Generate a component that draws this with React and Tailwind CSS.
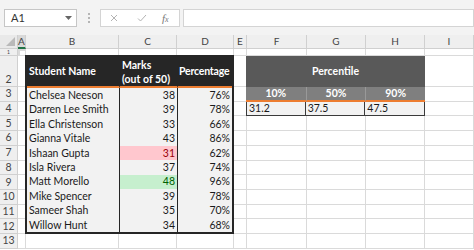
import React from "react";

const COLS = ["A", "B", "C", "D", "E", "F", "G", "H", "I"];

const STUDENTS = [
  { name: "Chelsea Neeson", marks: 38, pct: "76%" },
  { name: "Darren Lee Smith", marks: 39, pct: "78%" },
  { name: "Ella Christenson", marks: 33, pct: "66%" },
  { name: "Gianna Vitale", marks: 43, pct: "86%" },
  { name: "Ishaan Gupta", marks: 31, pct: "62%", tone: "bad" },
  { name: "Isla Rivera", marks: 37, pct: "74%" },
  { name: "Matt Morello", marks: 48, pct: "96%", tone: "good" },
  { name: "Mike Spencer", marks: 39, pct: "78%" },
  { name: "Sameer Shah", marks: 35, pct: "70%" },
  { name: "Willow Hunt", marks: 34, pct: "68%" },
];

function TopBar() {
  return (
    <div className="h-[35px] bg-[#f3f3f3] flex items-start pt-[9px] pl-[4px] text-[11px]">
      {/* name box */}
      <div className="w-[73px] h-[18px] bg-white border border-[#c6c6c6] flex items-center justify-between pl-[6px] pr-[4px] text-[#333]">
        <span>A1</span>
        <svg width="7" height="4" viewBox="0 0 7 4">
          <path d="M0 0h7L3.5 4z" fill="#666" />
        </svg>
      </div>
      <div className="w-[23px] h-[18px] flex flex-col items-center justify-center gap-[2px]">
        <span className="w-[2px] h-[2px] bg-[#b5b5b5]" />
        <span className="w-[2px] h-[2px] bg-[#b5b5b5]" />
        <span className="w-[2px] h-[2px] bg-[#b5b5b5]" />
      </div>
      {/* formula buttons */}
      <div className="w-[80px] h-[18px] bg-white border border-[#d4d4d4] flex items-center text-[#b0b0b0]">
        <svg className="ml-[9px]" width="8" height="8" viewBox="0 0 8 8">
          <path d="M1 1l6 6M7 1l-6 6" stroke="#b3b3b3" strokeWidth="1" />
        </svg>
        <svg className="ml-[19px]" width="10" height="8" viewBox="0 0 10 8">
          <path d="M1 4.5l2.5 2.5L9 1" stroke="#b3b3b3" strokeWidth="1" fill="none" />
        </svg>
        <span className="ml-[15px] italic font-['Liberation_Serif',serif] text-[11px] text-[#777]">
          f<span className="text-[8px]">x</span>
        </span>
      </div>
      <div className="ml-[3px] flex-1 h-[18px] bg-white border border-[#d4d4d4]" />
    </div>
  );
}

export default function App() {
  const rowNums = Array.from({ length: 13 }, (_, i) => i + 1);

  return (
    <main className="w-[474px] h-[250px] overflow-hidden bg-white font-['Lato','Open_Sans',sans-serif] text-[#1a1a1a]">
      <TopBar />

      <div className="grid grid-cols-[18px_8px_93px_58px_57px_13px_60px_59px_59px_1fr] grid-rows-[14px_7px_31px_repeat(11,14.73px)]">
        {/* corner */}
        <div className="col-start-1 row-start-1 bg-[#e9e9e9] border-r border-b border-[#cfcfcf] flex items-end justify-end p-[2px]">
          <svg width="9" height="9" viewBox="0 0 9 9">
            <path d="M9 0v9H0z" fill="#b9b9b9" />
          </svg>
        </div>

        {/* column headers */}
        {COLS.map((c, i) => (
          <div
            key={c}
            style={{ gridColumnStart: i + 2 }}
            className={`row-start-1 border-r border-b border-[#d0d0d0] flex items-center justify-center text-[10px] text-[#444] ${
              c === "A" ? "bg-[#d9d9d9] border-b-[#217346] border-b-2" : "bg-[#efefef]"
            }`}
          >
            {c}
          </div>
        ))}

        {/* row headers + cells */}
        {rowNums.map((r) => (
          <React.Fragment key={r}>
            <div
              style={{ gridRowStart: r + 1 }}
              className={`col-start-1 bg-[#efefef] border-r border-b border-[#d0d0d0] flex items-end justify-center text-[#444] leading-none overflow-hidden ${
                r === 1 ? "text-[5px] pb-0" : "text-[10.5px] pb-[2px]"
              }`}
            >
              {r}
            </div>
            {COLS.map((c, i) => (
              <div
                key={c}
                style={{ gridRowStart: r + 1, gridColumnStart: i + 2 }}
                className={`border-r border-b border-[#dadada] ${
                  c === "A" && r === 1 ? "border-2 border-[#217346]" : ""
                }`}
              />
            ))}
          </React.Fragment>
        ))}

        {/* student table */}
        <div className="col-start-3 col-end-6 row-start-3 row-end-14 border-2 border-[#262626] bg-[#f2f2f2] grid grid-cols-[92px_58px_1fr] grid-rows-[31px_repeat(10,1fr)] text-[10.5px] -ml-[1px] -mt-[1px]">
          <div className="bg-[#262626] text-white font-bold flex items-center pl-[2px] border-b-2 border-[#ed7d31]">
            Student Name
          </div>
          <div className="bg-[#262626] text-white font-bold flex items-center pl-[2px] leading-[14px] border-l border-[#262626] border-b-2 border-b-[#ed7d31]">
            Marks
            <br />
            (out of 50)
          </div>
          <div className="bg-[#262626] text-white font-bold flex items-center pl-[1px] tracking-[-0.2px] border-l border-[#262626] border-b-2 border-b-[#ed7d31]">
            Percentage
          </div>
          {STUDENTS.map((s) => (
            <React.Fragment key={s.name}>
              <div className="flex items-center pl-[2px] leading-none">{s.name}</div>
              <div
                className={`flex items-center justify-end pr-[2px] leading-none border-l border-[#262626] ${
                  s.tone === "bad"
                    ? "bg-[#ffc7ce] text-[#9c0006]"
                    : s.tone === "good"
                    ? "bg-[#c6efce] text-[#006100]"
                    : ""
                }`}
              >
                {s.marks}
              </div>
              <div className="flex items-center justify-end pr-[2px] leading-none border-l border-[#262626]">
                {s.pct}
              </div>
            </React.Fragment>
          ))}
        </div>

        {/* percentile table */}
        <div className="col-start-7 col-end-10 row-start-3 row-end-6 grid grid-cols-3 grid-rows-[31px_1fr_1fr] text-[10.5px] -ml-[1px]">
          <div className="col-span-3 bg-[#595959] text-white font-bold flex items-center justify-center">
            Percentile
          </div>
          {["10%", "50%", "90%"].map((p, i) => (
            <div
              key={p}
              className={`bg-[#7f7f7f] text-white font-bold flex items-center justify-center leading-none border-b-2 border-[#ed7d31] ${
                i > 0 ? "border-l border-l-[#999]" : ""
              }`}
            >
              {p}
            </div>
          ))}
          {["31.2", "37.5", "47.5"].map((v, i) => (
            <div
              key={v}
              className={`bg-[#f2f2f2] flex items-center pl-[2px] leading-none border-b border-[#3a3a3a] border-r ${
                i === 0 ? "border-l" : ""
              }`}
            >
              {v}
            </div>
          ))}
        </div>
      </div>
    </main>
  );
}
